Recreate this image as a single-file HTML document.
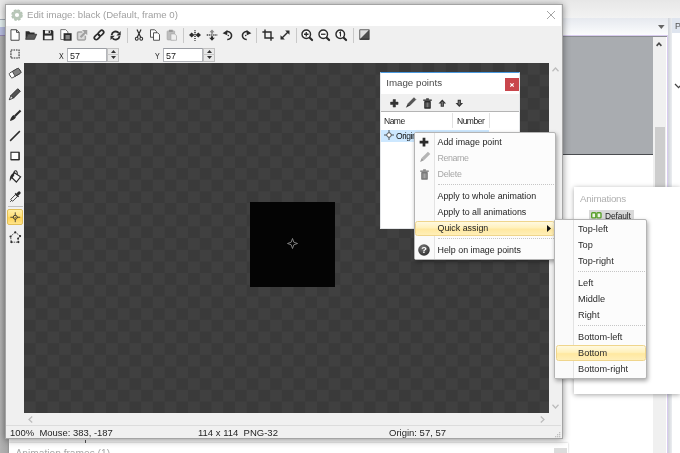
<!DOCTYPE html>
<html>
<head>
<meta charset="utf-8">
<title>Edit image</title>
<style>
html,body{margin:0;padding:0;}
body{width:680px;height:453px;overflow:hidden;position:relative;background:#ffffff;font-family:"Liberation Sans","DejaVu Sans",sans-serif;font-size:9px;color:#1e1e1e;}
.abs{position:absolute;}
.t{position:absolute;white-space:nowrap;line-height:12px;height:12px;transform-origin:0 50%;}
svg{position:absolute;overflow:visible;}
#all{position:absolute;left:0;top:0;width:680px;height:453px;overflow:hidden;filter:blur(0.35px);}
.mi{font-size:8.9px;color:#2a2a2a;}
.smi{font-size:9.2px;}
</style>
</head>
<body>
<div id="all">

<!-- ===== background app behind ===== -->
<div class="abs" style="left:0;top:0;width:680px;height:19px;background:linear-gradient(#e7e7e7,#f3f3f3);"></div>
<!-- left sliver -->
<div class="abs" style="left:0;top:35.800px;width:9px;height:418px;background:linear-gradient(90deg,#b2b2b2,#a2a2a2);"></div>
<div class="abs" style="left:0;top:18.600px;width:6px;height:1px;background:#a5adb8;"></div>
<div class="abs" style="left:0;top:19.600px;width:6px;height:7.600px;background:#e4f0f0;"></div>
<div class="abs" style="left:0;top:27.200px;width:6px;height:7.500px;background:#b8bee1;"></div>
<div class="abs" style="left:0;top:34.600px;width:6px;height:1.200px;background:#9686b4;"></div>
<!-- tab strip right -->
<div class="abs" style="left:560px;top:18px;width:108px;height:17px;background:linear-gradient(#e6e9ef,#fbfcfd);"></div>
<svg style="left:657.5px;top:24.9px" width="7" height="4"><path d="M0 0H6.600L3.300 3.900Z" fill="#666"/></svg>
<div class="abs" style="left:560px;top:34.9px;width:108.300px;height:1.4px;background:#d9ccef;"></div>
<div class="abs" style="left:560px;top:36.200px;width:106.500px;height:1.1px;background:#8a8d91;"></div>
<!-- layout gray -->
<div class="abs" style="left:560px;top:37.300px;width:93.300px;height:116.700px;background:#a9acb0;"></div>
<div class="abs" style="left:560px;top:154px;width:94px;height:1px;background:#4a4c50;"></div>
<div class="abs" style="left:560px;top:155px;width:94px;height:298px;background:#ffffff;"></div>
<!-- right scrollbar -->
<div class="abs" style="left:653.300px;top:37.300px;width:13.200px;height:416px;background:#f0f0f0;"></div>
<svg style="left:656.200px;top:41.600px" width="6" height="5"><path d="M0.600 3.900L3 1.300L5.400 3.900" fill="none" stroke="#484848" stroke-width="1.600"/></svg>
<div class="abs" style="left:655px;top:127px;width:10px;height:70px;background:#cdcdcd;"></div>
<div class="abs" style="left:666.500px;top:35px;width:1.800px;height:418px;background:#d8caef;"></div>
<div class="abs" style="left:668.300px;top:18px;width:3.700px;height:435px;background:linear-gradient(90deg,#cfd3d9,#eceef1);"></div>
<div class="abs" style="left:672px;top:18px;width:8px;height:15.3px;background:#dfe5ef;"></div>
<div class="t" style="left:675px;top:19.6px;font-size:8.8px;color:#555;">P</div>
<div class="abs" style="left:672px;top:33.3px;width:8px;height:420px;background:#ffffff;"></div>
<svg style="left:674.5px;top:82.5px" width="6" height="6"><path d="M0 1L3.6 4.6L7.200 1" fill="none" stroke="#444" stroke-width="1.3"/></svg>

<!-- bottom animation frames panel -->
<div class="abs" style="left:9px;top:443px;width:559px;height:10px;background:#ffffff;box-shadow:0 0 2px rgba(0,0,0,.25);"></div>
<div class="abs" style="left:553.8px;top:448px;width:13px;height:5px;background:#dcdcdc;"></div>
<div class="t" style="left:15.5px;top:447.5px;font-size:10.2px;color:#a8a8a8;">Animation frames (1)</div>

<div class="abs" style="left:85.2px;top:440px;width:1.2px;height:2.8px;background:#555;"></div>
<!-- animations panel -->
<div class="abs" style="left:574px;top:187px;width:106px;height:207px;background:#ffffff;box-shadow:0 1px 5px rgba(0,0,0,.35);"></div>
<div class="t" id="tanim" style="left:580px;top:193px;font-size:9.8px;letter-spacing:-0.25px;color:#afafaf;">Animations</div>
<div class="abs" style="left:589px;top:210px;width:45px;height:12px;background:#d9d9d9;"></div>
<svg style="left:591px;top:211.6px" width="11" height="7"><rect x="0.7" y="0.7" width="4.1" height="5.2" rx="0.8" fill="#eef7e6" stroke="#5aa02c" stroke-width="1.4"/><rect x="5.9" y="0.7" width="4.1" height="5.2" rx="0.8" fill="#eef7e6" stroke="#5aa02c" stroke-width="1.4"/></svg>
<div class="t" id="tdef" style="left:605px;top:210px;font-size:8.4px;letter-spacing:-0.1px;color:#222;">Default</div>

<!-- ===== main window ===== -->
<div id="win" class="abs" style="left:5px;top:4px;width:557.5px;height:435.3px;background:#f0f0f0;box-shadow:0 0 0 1px #a4a4a4 inset,0 1px 7px rgba(0,0,0,.45);"></div>
<!-- title -->
<div class="abs" style="left:6px;top:5px;width:555px;height:21px;background:#ffffff;"></div>
<svg style="left:11px;top:9px" width="12" height="12" viewBox="0 0 12 12"><circle cx="6" cy="6" r="4.2" fill="none" stroke="#b3c3b3" stroke-width="3.2" stroke-dasharray="2.2 1.1"/><circle cx="6" cy="6" r="3.5" fill="none" stroke="#b9c7b9" stroke-width="2.8"/></svg>
<div class="t" id="ttitle" style="left:27px;top:9px;font-size:9.65px;color:#a0a0a0;">Edit image: black (Default, frame 0)</div>
<svg style="left:547px;top:11px" width="8" height="8"><path d="M0 0L8 8M8 0L0 8" stroke="#9a9a9a" stroke-width=".9"/></svg>

<!-- canvas -->
<div id="canvas" class="abs" style="left:24.4px;top:63px;width:524.6px;height:350px;background-color:#3a3a3a;background-image:conic-gradient(#404040 25%,#3a3a3a 0 50%,#404040 0 75%,#3a3a3a 0);background-size:23.45px 23.35px;background-position:0 0;"></div>
<!-- black image -->
<div class="abs" style="left:250.4px;top:201.8px;width:84.9px;height:84.8px;background:#040404;"></div>
<svg style="left:287px;top:238px" width="11" height="11" viewBox="0 0 11 11"><path d="M5.5 0.5L6.8 4.2L10.5 5.5L6.8 6.8L5.5 10.5L4.2 6.8L0.5 5.5L4.2 4.2Z" fill="none" stroke="#8a8a8a" stroke-width="0.9"/></svg>

<!-- scrollbars -->
<svg style="left:552px;top:67px" width="7" height="5"><path d="M0.5 4.2L3.5 1L6.5 4.2" fill="none" stroke="#bcbcbc" stroke-width="1.25"/></svg>
<svg style="left:552px;top:404px" width="7" height="5"><path d="M0.5 0.8L3.5 4L6.5 0.8" fill="none" stroke="#bcbcbc" stroke-width="1.25"/></svg>
<svg style="left:28px;top:416px" width="5" height="7"><path d="M4.2 0.5L1 3.5L4.2 6.5" fill="none" stroke="#bcbcbc" stroke-width="1.25"/></svg>
<svg style="left:540px;top:416px" width="5" height="7"><path d="M0.8 0.5L4 3.5L0.8 6.5" fill="none" stroke="#bcbcbc" stroke-width="1.25"/></svg>
<!-- status -->
<div class="abs" style="left:6px;top:425px;width:555px;height:1px;background:#dcdcdc;"></div>
<div class="t" id="tst1" style="left:10px;top:427px;font-size:9.45px;">100%&nbsp; Mouse: 383, -187</div>
<div class="t" id="tst2" style="left:198px;top:427px;font-size:9.5px;">114 x 114&nbsp; PNG-32</div>
<div class="t" id="tst3" style="left:389px;top:427px;font-size:9.5px;">Origin: 57, 57</div>
<svg style="left:555px;top:432px" width="6" height="6"><g fill="#c0c0c0"><rect x="4" y="0" width="1.3" height="1.3"/><rect x="2" y="2" width="1.3" height="1.3"/><rect x="4" y="2" width="1.3" height="1.3"/><rect x="0" y="4" width="1.3" height="1.3"/><rect x="2" y="4" width="1.3" height="1.3"/><rect x="4" y="4" width="1.3" height="1.3"/></g></svg>

<!-- TOOLBAR-ICONS -->
<svg style="left:8.8px;top:29px" width="12" height="12" viewBox="0 0 16 16"><path d="M2.6 1h7.4l3.5 3.5V15H2.600Z" fill="#fdfdfd" stroke="#444" stroke-width="1.3"/><path d="M10 1v3.5h3.5" fill="none" stroke="#2b2b2b" stroke-width="1.1"/></svg>
<svg style="left:25px;top:29px" width="12" height="12" viewBox="0 0 16 16"><path d="M0.8 13.5V3h4.7l1.3 1.5h6V7H4Z" fill="#2b2b2b"/><path d="M4 7h11.6l-3 6.8H0.9Z" fill="#5a5a5a" stroke="#2b2b2b" stroke-width="1"/></svg>
<svg style="left:42px;top:29px" width="12" height="12" viewBox="0 0 16 16"><path d="M1.2 1.200h12.300l1.700 1.700v12h-14z" fill="#2b2b2b"/><rect x="4" y="1.800" width="7.600" height="4.200" fill="#f4f4f4"/><rect x="8.800" y="2.400" width="1.800" height="3" fill="#2b2b2b"/><rect x="3.400" y="8.800" width="9.600" height="5" fill="#f4f4f4"/></svg>
<svg style="left:59.5px;top:29px" width="12" height="12" viewBox="0 0 16 16"><path d="M1 0.800h6.500l3 3V14H1z" fill="#fdfdfd" stroke="#666" stroke-width="1.200"/><rect x="4.800" y="5.600" width="10.700" height="10" fill="#2b2b2b"/><rect x="7.300" y="8" width="5.800" height="5.800" fill="#858585"/></svg>
<svg style="left:76.3px;top:29px" width="12" height="12" viewBox="0 0 16 16"><path d="M8.500 4H3.500a1.500 1.500 0 0 0-1.500 1.500v7.500A1.500 1.500 0 0 0 3.500 14.500h7.500a1.500 1.500 0 0 0 1.500-1.500V9" fill="#dadada" stroke="#a4a4a4" stroke-width="2"/><path d="M6 11L13 4" stroke="#a0a0a0" stroke-width="2.800"/><path d="M8 1.300h7v7z" fill="#a0a0a0"/></svg>
<svg style="left:92.7px;top:29px" width="12" height="12" viewBox="0 0 16 16"><g transform="rotate(-45 8 8)" fill="none" stroke="#2b2b2b" stroke-width="2.2"><rect x="0.2" y="5.4" width="8.2" height="5.2" rx="2.6"/><rect x="7.6" y="5.4" width="8.2" height="5.2" rx="2.6"/></g></svg>
<svg style="left:110.3px;top:29.7px" width="11.2" height="11.2" viewBox="0 0 16 16"><path d="M2.3 7.2A5.8 5.8 0 0 1 12.4 4.2" fill="none" stroke="#2b2b2b" stroke-width="2.6"/><path d="M15.3 1.6v6.2H9.2z" fill="#2b2b2b"/><path d="M13.7 8.8A5.8 5.8 0 0 1 3.6 11.8" fill="none" stroke="#2b2b2b" stroke-width="2.6"/><path d="M0.7 14.4V8.2h6.1z" fill="#2b2b2b"/></svg>
<div class="abs" style="left:126.5px;top:28px;width:1px;height:15px;background:#c9c9c9;"></div>
<svg style="left:132.6px;top:29px" width="12" height="12" viewBox="0 0 16 16"><path d="M5.300 0.800L10.300 11M10.700 0.800L5.700 11" stroke="#2b2b2b" stroke-width="1.600" fill="none"/><circle cx="5" cy="13" r="1.900" fill="none" stroke="#2b2b2b" stroke-width="1.400"/><circle cx="11" cy="13" r="1.900" fill="none" stroke="#2b2b2b" stroke-width="1.400"/></svg>
<svg style="left:149px;top:29px" width="12" height="12" viewBox="0 0 16 16"><path d="M2 1h5.5l2.5 2.5V11H2Z" fill="#fdfdfd" stroke="#444" stroke-width="1.2"/><path d="M6 5h5.5L14 7.5V15H6Z" fill="#fdfdfd" stroke="#444" stroke-width="1.2"/></svg>
<svg style="left:166px;top:29px" width="12" height="12" viewBox="0 0 16 16"><rect x="1.5" y="2.5" width="10" height="12" rx="1" fill="#bdbdbd" stroke="#a9a9a9" stroke-width="1"/><rect x="4" y="1" width="5" height="3" fill="#9a9a9a"/><path d="M6.5 6.5h5l2.5 2.5v6h-7.5z" fill="#efefef" stroke="#a9a9a9" stroke-width="1"/></svg>
<div class="abs" style="left:183px;top:28px;width:1px;height:15px;background:#c9c9c9;"></div>
<svg style="left:189px;top:29px" width="12" height="12" viewBox="0 0 16 16"><path d="M0 8L3.600 4.600 7.200 8 3.600 11.400zM8.800 8L12.400 4.600 16 8 12.400 11.400z" fill="#2b2b2b"/><path d="M8 1.500v14" stroke="#2b2b2b" stroke-width="2" stroke-dasharray="1.500 1.100"/></svg>
<svg style="left:205.6px;top:29px" width="12" height="12" viewBox="0 0 16 16"><path d="M8 0.800L11.400 4.400H9.400V6.400H6.600V4.400H4.600z" fill="#8a8a8a"/><path d="M8 15.600L11.800 11.600H9.400V9.600H6.600V11.600H4.200z" fill="#2b2b2b"/><path d="M1 8h14" stroke="#2b2b2b" stroke-width="2" stroke-dasharray="1.500 1.100"/></svg>
<svg style="left:222.3px;top:29px" width="12" height="12" viewBox="0 0 16 16"><path d="M5.500 3.800A5.300 5.300 0 1 1 7 14" fill="none" stroke="#2b2b2b" stroke-width="2.100"/><path d="M0.800 5.600L7.200 1.400 7 8.200z" fill="#2b2b2b"/><circle cx="8.400" cy="8.600" r="1" fill="#2b2b2b"/></svg>
<svg style="left:239.7px;top:29px" width="12" height="12" viewBox="0 0 16 16"><path d="M10.500 3.800A5.300 5.300 0 1 0 9 14" fill="none" stroke="#2b2b2b" stroke-width="2.100"/><path d="M15.200 5.600L8.800 1.400 9 8.200z" fill="#2b2b2b"/><circle cx="7.600" cy="8.600" r="1" fill="#2b2b2b"/></svg>
<div class="abs" style="left:256px;top:28px;width:1px;height:15px;background:#c9c9c9;"></div>
<svg style="left:262px;top:29px" width="12" height="12" viewBox="0 0 16 16"><path d="M4 0.5V12H15.5M0.5 4H12V15.5" fill="none" stroke="#2b2b2b" stroke-width="1.9"/></svg>
<svg style="left:279px;top:29px" width="12" height="12" viewBox="0 0 16 16"><path d="M4 12L12 4" stroke="#2b2b2b" stroke-width="2"/><path d="M8.2 2h5.8v5.8zM2 8.2V14h5.8z" fill="#2b2b2b"/></svg>
<div class="abs" style="left:296px;top:28px;width:1px;height:15px;background:#c9c9c9;"></div>
<svg style="left:301px;top:29px" width="12" height="12" viewBox="0 0 16 16"><circle cx="7" cy="7" r="5.700" fill="#fafafa" stroke="#2b2b2b" stroke-width="1.900"/><path d="M11.600 11.600L14.800 14.800" stroke="#2b2b2b" stroke-width="2.800" stroke-linecap="round"/><path d="M4 7h6M7 4v6" stroke="#2b2b2b" stroke-width="1.7"/></svg>
<svg style="left:318px;top:29px" width="12" height="12" viewBox="0 0 16 16"><circle cx="7" cy="7" r="5.700" fill="#fafafa" stroke="#2b2b2b" stroke-width="1.900"/><path d="M11.600 11.600L14.800 14.800" stroke="#2b2b2b" stroke-width="2.800" stroke-linecap="round"/><path d="M4 7h6" stroke="#2b2b2b" stroke-width="1.7"/></svg>
<svg style="left:335px;top:29px" width="12" height="12" viewBox="0 0 16 16"><circle cx="7" cy="7" r="5.700" fill="#fafafa" stroke="#2b2b2b" stroke-width="1.900"/><path d="M11.600 11.600L14.800 14.800" stroke="#2b2b2b" stroke-width="2.800" stroke-linecap="round"/><path d="M5.800 5.400L7.300 4.300v5.800" fill="none" stroke="#2b2b2b" stroke-width="1.5"/></svg>
<div class="abs" style="left:352.5px;top:28px;width:1px;height:15px;background:#c9c9c9;"></div>
<svg style="left:358.7px;top:29.4px" width="11" height="11" viewBox="0 0 16 16"><rect x="1.200" y="1.200" width="13.600" height="13.600" fill="#4e4e4e"/><path d="M1.200 1.200H14.800L1.200 14.800z" fill="#dedede"/><rect x="1.200" y="1.200" width="13.600" height="13.600" fill="none" stroke="#3a3a3a" stroke-width="1"/><path d="M1 15h14" stroke="#222" stroke-width="1.200"/></svg>
<!-- /TOOLBAR-ICONS -->
<!-- LEFT-TOOLS -->
<svg style="left:9.9px;top:48.7px" width="10" height="10" viewBox="0 0 16 16"><rect x="1.500" y="1.500" width="13" height="13" fill="none" stroke="#2b2b2b" stroke-width="1.700" stroke-dasharray="2.600 1.400"/></svg>
<svg style="left:8.9px;top:67.3px" width="12" height="12" viewBox="0 0 16 16"><g transform="rotate(-30 8 8)"><rect x="0.500" y="4.500" width="15" height="7.400" rx="1.800" fill="#fff" stroke="#3a3a3a" stroke-width="1.100"/><path d="M6 4.500H13.700a1.800 1.800 0 0 1 1.800 1.800V10.100a1.800 1.800 0 0 1-1.800 1.800H6z" fill="#808080" stroke="#3a3a3a" stroke-width="1"/></g></svg>
<svg style="left:8.3px;top:88.8px" width="12" height="12" viewBox="0 0 16 16"><g transform="rotate(45 8 8)"><rect x="5.6" y="-1.5" width="4.8" height="13" fill="#555" stroke="#2b2b2b" stroke-width="1.2"/><path d="M5.6 11.5h4.8L8 17z" fill="#ddd" stroke="#2b2b2b" stroke-width="1"/><path d="M7.3 15.3h1.4L8 17z" fill="#2b2b2b"/></g></svg>
<svg style="left:9px;top:109.5px" width="12" height="12" viewBox="0 0 16 16"><g transform="rotate(45 8 8)"><rect x="6.6" y="-2.5" width="2.8" height="11" fill="#2b2b2b"/><path d="M5.8 8.5h4.4c.6 3-.4 6-2.2 9-1.800-3-2.800-6-2.200-9z" fill="#2b2b2b"/></g></svg>
<svg style="left:9px;top:129.5px" width="12" height="12" viewBox="0 0 16 16"><path d="M1.5 14.5L14.5 1.5" stroke="#2b2b2b" stroke-width="1.9"/></svg>
<svg style="left:8.65px;top:149.8px" width="12" height="12" viewBox="0 0 16 16"><rect x="2.600" y="3" width="10.600" height="9.800" fill="#fff" stroke="#2b2b2b" stroke-width="1.500"/><path d="M2.600 13.200h11.200V3" fill="none" stroke="#2b2b2b" stroke-width="1.200"/></svg>
<svg style="left:8.55px;top:170.05px" width="12.5" height="12.5" viewBox="0 0 16 16"><path d="M7 3.400L14.800 8.800 9.400 15.400 3 9.200z" fill="#fafafa" stroke="#2b2b2b" stroke-width="1.500"/><path d="M6.800 3.600C3 4.500 0.800 8 1 14.600 2.600 12 3.600 10.600 5.200 9.400z" fill="#2b2b2b"/><path d="M6 8C5.600 4 6.400 1.200 8.200 1 10 0.800 10.800 3 10.600 6" fill="none" stroke="#2b2b2b" stroke-width="1.300"/></svg>
<svg style="left:9px;top:191px" width="12" height="12" viewBox="0 0 16 16"><g transform="rotate(45 8 8)"><rect x="6.200" y="5" width="3.600" height="9.500" rx=".8" fill="#f4f4f4" stroke="#2b2b2b" stroke-width="1.1"/><rect x="4.800" y="3.300" width="6.400" height="2.200" fill="#2b2b2b"/><rect x="6" y="-1.800" width="4" height="5.500" rx="1.800" fill="#2b2b2b"/><path d="M8 14.500v2.500" stroke="#2b2b2b" stroke-width="1.200"/></g></svg>
<div class="abs" style="left:8px;top:205.500px;width:15px;height:1px;background:#c0c0c0;"></div>
<div class="abs" style="left:7.300px;top:209.200px;width:16.200px;height:16.300px;box-sizing:border-box;border:1px solid #e3bf55;border-radius:2px;background:linear-gradient(#ffefa6,#ffe07a 45%,#ffd352 55%,#ffe48a);"></div>
<svg style="left:9.55px;top:211.95px" width="10.5" height="10.5" viewBox="0 0 16 16"><circle cx="8" cy="8" r="3" fill="none" stroke="#2b2b2b" stroke-width="1.300"/><path d="M8 0.500v5M8 10.500v5M0.500 8h5M10.500 8h5" stroke="#2b2b2b" stroke-width="1.200"/><circle cx="8" cy="8" r=".900" fill="#2b2b2b"/></svg>
<svg style="left:8.75px;top:231.45px" width="12.5" height="12.5" viewBox="0 0 16 16"><path d="M8 1.500L14.300 6.500 11.500 9.500 12 14.300 3 14.300 2 7z" fill="none" stroke="#2b2b2b" stroke-width="1" stroke-dasharray="2 1"/><g fill="#2b2b2b"><circle cx="8" cy="1.700" r="1.400"/><circle cx="14.200" cy="6.500" r="1.400"/><circle cx="11.600" cy="9.600" r="1.200"/><circle cx="12" cy="14.200" r="1.400"/><circle cx="3" cy="14.200" r="1.400"/><circle cx="2" cy="7" r="1.400"/></g></svg>
<!-- /LEFT-TOOLS -->
<!-- XY-INPUTS -->
<div class="t" style="left:59px;top:50px;font-size:8.300px;color:#222;transform:scaleX(.85);">X</div>
<div class="abs" style="left:67px;top:47.500px;width:40px;height:14px;box-sizing:border-box;background:#fff;border:1px solid #b4b6bb;border-top-color:#9a9da3;"></div>
<div class="t" style="left:70px;top:49.500px;font-size:9px;color:#1a1a1a;">57</div>
<div class="abs" style="left:107px;top:47.500px;width:12px;height:14px;box-sizing:border-box;background:#e9e9e9;border:1px solid #c2c2c2;"></div>
<div class="abs" style="left:107px;top:54px;width:12px;height:1px;background:#c8c8c8;"></div>
<svg style="left:110.5px;top:50px" width="5" height="3"><path d="M0 3L2.500 0 5 3z" fill="#333"/></svg>
<svg style="left:110.5px;top:56.300px" width="5" height="3"><path d="M0 0L2.500 3 5 0z" fill="#333"/></svg>
<div class="t" style="left:155px;top:50px;font-size:8.300px;color:#222;transform:scaleX(.85);">Y</div>
<div class="abs" style="left:163px;top:47.500px;width:40px;height:14px;box-sizing:border-box;background:#fff;border:1px solid #b4b6bb;border-top-color:#9a9da3;"></div>
<div class="t" style="left:166px;top:49.500px;font-size:9px;color:#1a1a1a;">57</div>
<div class="abs" style="left:203px;top:47.500px;width:12px;height:14px;box-sizing:border-box;background:#e9e9e9;border:1px solid #c2c2c2;"></div>
<div class="abs" style="left:203px;top:54px;width:12px;height:1px;background:#c8c8c8;"></div>
<svg style="left:206.5px;top:50px" width="5" height="3"><path d="M0 3L2.500 0 5 3z" fill="#333"/></svg>
<svg style="left:206.5px;top:56.300px" width="5" height="3"><path d="M0 0L2.500 3 5 0z" fill="#333"/></svg>
<!-- /XY-INPUTS -->
<!-- IMAGE-POINTS-PANEL -->
<div class="abs" style="left:380px;top:72px;width:140px;height:157px;box-sizing:border-box;background:#fff;border:1px solid #e4e6e8;border-top:1px solid #4a9ae0;"></div>
<div class="t" id="tip" style="left:386.200px;top:77.400px;font-size:9.750px;color:#4a4a4a;">Image points</div>
<div class="abs" style="left:505px;top:78px;width:14px;height:13px;background:#c9464c;"></div>
<svg style="left:510.300px;top:82.700px" width="4" height="4"><path d="M0.300 0.300L3.700 3.700M3.700 0.300L0.300 3.700" stroke="#fff" stroke-width="1.200"/></svg>
<div class="abs" style="left:381px;top:94px;width:138px;height:16.600px;background:#f0f0f0;border-bottom:1px solid #b4b4b4;"></div>
<svg style="left:390.3px;top:98.7px" width="8.6" height="8.6" viewBox="0 0 16 16"><path d="M5.800 1h4.400v4.800H15v4.400h-4.800V15H5.800v-4.800H1V5.800h4.800z" fill="#333" stroke="#333" stroke-width="1" stroke-linejoin="round"/></svg>
<svg style="left:405.45px;top:97.95px" width="10.5" height="10.5" viewBox="0 0 16 16"><g transform="rotate(45 8 8)"><rect x="6" y="-2" width="4" height="13.500" fill="#555" stroke="#333" stroke-width=".8"/><path d="M6 11.500h4L8 17.500z" fill="#333"/></g></svg>
<svg style="left:422px;top:97.7px" width="11" height="11" viewBox="0 0 16 16"><rect x="3.200" y="4.500" width="9.600" height="11" rx="1" fill="#2b2b2b"/><rect x="1.800" y="2.200" width="12.400" height="1.900" fill="#2b2b2b"/><rect x="6" y="0.500" width="4" height="2" fill="#2b2b2b"/><path d="M6 6.500v7M8 6.500v7M10 6.500v7" stroke="#bbb" stroke-width=".8"/></svg>
<svg style="left:438.3px;top:98.9px" width="8.6" height="8.6" viewBox="0 0 16 16"><path d="M8 1L15 8.500H11V14.500H5V8.500H1z" fill="#333"/><path d="M8 4.600L10.600 7.400H9.200V12.600H6.800V7.400H5.400z" fill="#777"/></svg>
<svg style="left:454.7px;top:98.9px" width="8.6" height="8.6" viewBox="0 0 16 16"><path d="M8 15L15 7.500H11V1.500H5V7.500H1z" fill="#333"/><path d="M8 11.400L10.600 8.600H9.200V3.400H6.800V8.600H5.400z" fill="#777"/></svg>
<div class="t" id="hname" style="left:384px;top:115px;font-size:8.500px;letter-spacing:-0.5px;color:#222;">Name</div>
<div class="t" id="hnum" style="left:457px;top:115px;font-size:8.500px;letter-spacing:-0.5px;color:#222;">Number</div>
<div class="abs" style="left:452px;top:113px;width:1px;height:15px;background:#e2e2e2;"></div>
<div class="abs" style="left:489px;top:113px;width:1px;height:15px;background:#e2e2e2;"></div>
<div class="abs" style="left:381px;top:129.500px;width:108px;height:12.500px;background:#cde8ff;"></div>
<svg style="left:383.6px;top:130.2px" width="10" height="10" viewBox="0 0 16 16"><circle cx="8" cy="8" r="3.600" fill="#fff" stroke="#333" stroke-width="1.300"/><path d="M8 0v4.400M8 11.600v4.400M0 8h4.400M11.600 8h4.400" stroke="#333" stroke-width="1.300"/></svg>
<div class="t" id="horig" style="left:396px;top:129.500px;font-size:8.500px;letter-spacing:-0.4px;color:#111;">Origin</div>
<!-- /IMAGE-POINTS-PANEL -->
<!-- CONTEXT-MENU -->
<div class="abs" style="left:414px;top:131.600px;width:141.700px;height:128px;box-sizing:border-box;background:#fcfcfc;border:1px solid #b4b4b4;border-radius:2px;box-shadow:1px 2px 4px rgba(0,0,0,.35);"></div>
<div class="abs" style="left:415px;top:133px;width:19px;height:125.500px;background:#fafafa;"></div>
<div class="abs" style="left:433.500px;top:133px;width:1px;height:125.500px;background:#e3e3e3;"></div>
<div class="abs" style="left:415px;top:220.500px;width:139.800px;height:15.200px;box-sizing:border-box;border:1px solid #efd58c;border-radius:2.500px;background:linear-gradient(#fff9e0,#fff1bc 45%,#ffe8a0 55%,#ffefb8);"></div>
<div class="t mi" id="mi1" style="left:437.500px;top:136px;color:#1e1e1e;">Add image point</div>
<div class="t mi" style="left:437.500px;top:152px;color:#a6a6a6;letter-spacing:-0.42px;">Rename</div>
<div class="t mi" style="left:437.500px;top:168px;color:#a6a6a6;letter-spacing:-0.25px;">Delete</div>
<div class="abs" style="left:438px;top:184px;width:116px;height:0;border-top:1px dotted #c6c6c6;"></div>
<div class="t mi" id="mi2" style="left:437.500px;top:190px;color:#1e1e1e;">Apply to whole animation</div>
<div class="t mi" style="left:437.500px;top:206px;color:#1e1e1e;">Apply to all animations</div>
<div class="t mi" style="left:437.500px;top:222px;color:#1e1e1e;">Quick assign</div>
<svg style="left:547px;top:224.500px" width="4" height="7"><path d="M0 0L4 3.500 0 7z" fill="#111"/></svg>
<div class="abs" style="left:438px;top:238px;width:116px;height:0;border-top:1px dotted #c6c6c6;"></div>
<div class="t mi" id="mi3" style="left:437.500px;top:243.5px;color:#1e1e1e;">Help on image points</div>
<svg style="left:419px;top:136.5px" width="10" height="10" viewBox="0 0 16 16"><path d="M5.800 1h4.400v4.800H15v4.400h-4.800V15H5.800v-4.800H1V5.800h4.800z" fill="#2b2b2b"/></svg>
<svg style="left:418.5px;top:152px" width="11" height="11" viewBox="0 0 16 16"><g transform="rotate(45 8 8)"><rect x="5.600" y="-1.500" width="4.800" height="13" fill="#b5b5b5"/><path d="M5.600 11.500h4.800L8 17z" fill="#9a9a9a"/></g></svg>
<svg style="left:419px;top:168.5px" width="11" height="11" viewBox="0 0 16 16"><rect x="3.200" y="4.500" width="9.600" height="11" rx="1" fill="#787878"/><rect x="1.800" y="2.200" width="12.400" height="1.900" fill="#787878"/><rect x="6" y="0.500" width="4" height="2" fill="#787878"/><path d="M6 6.500v7M8 6.500v7M10 6.500v7" stroke="#ccc" stroke-width=".8"/></svg>
<svg style="left:418px;top:244px" width="12" height="12" viewBox="0 0 11 11"><defs><radialGradient id="hg" cx=".4" cy=".3" r=".8"><stop offset="0" stop-color="#7a7a7a"/><stop offset="1" stop-color="#262626"/></radialGradient></defs><circle cx="5.500" cy="5.500" r="5.300" fill="url(#hg)"/><text x="5.500" y="8.600" text-anchor="middle" font-family="Liberation Sans, sans-serif" font-weight="bold" font-size="8.500" fill="#fff">?</text></svg>
<!-- /CONTEXT-MENU -->
<!-- SUBMENU -->
<div class="abs" style="left:554px;top:218.500px;width:93px;height:160px;box-sizing:border-box;background:#fcfcfc;border:1px solid #b4b4b4;border-radius:2px;box-shadow:1px 2px 4px rgba(0,0,0,.35);"></div>
<div class="abs" style="left:555px;top:219.500px;width:18px;height:158px;background:#fafafa;"></div>
<div class="abs" style="left:573px;top:219.500px;width:1px;height:158px;background:#e3e3e3;"></div>
<div class="abs" style="left:556px;top:345px;width:90px;height:15.500px;box-sizing:border-box;border:1px solid #efd58c;border-radius:2.500px;background:linear-gradient(#fff9e0,#fff1bc 45%,#ffe8a0 55%,#ffefb8);"></div>
<div class="t mi smi" id="sTopleft" style="left:578px;top:223px;">Top-left</div>
<div class="t mi smi" id="sTop" style="left:578px;top:239px;">Top</div>
<div class="t mi smi" id="sTopright" style="left:578px;top:255px;">Top-right</div>
<div class="t mi smi" id="sLeft" style="left:578px;top:277px;">Left</div>
<div class="t mi smi" id="sMiddle" style="left:578px;top:293px;">Middle</div>
<div class="t mi smi" id="sRight" style="left:578px;top:309px;">Right</div>
<div class="t mi smi" id="sBottomleft" style="left:578px;top:331px;">Bottom-left</div>
<div class="t mi smi" id="sBottom" style="left:578px;top:347px;">Bottom</div>
<div class="t mi smi" id="sBottomright" style="left:578px;top:363px;">Bottom-right</div>
<div class="abs" style="left:578px;top:271px;width:67px;height:0;border-top:1px dotted #c6c6c6;"></div>
<div class="abs" style="left:578px;top:325px;width:67px;height:0;border-top:1px dotted #c6c6c6;"></div>
<!-- /SUBMENU -->

</div>
</body>
</html>
